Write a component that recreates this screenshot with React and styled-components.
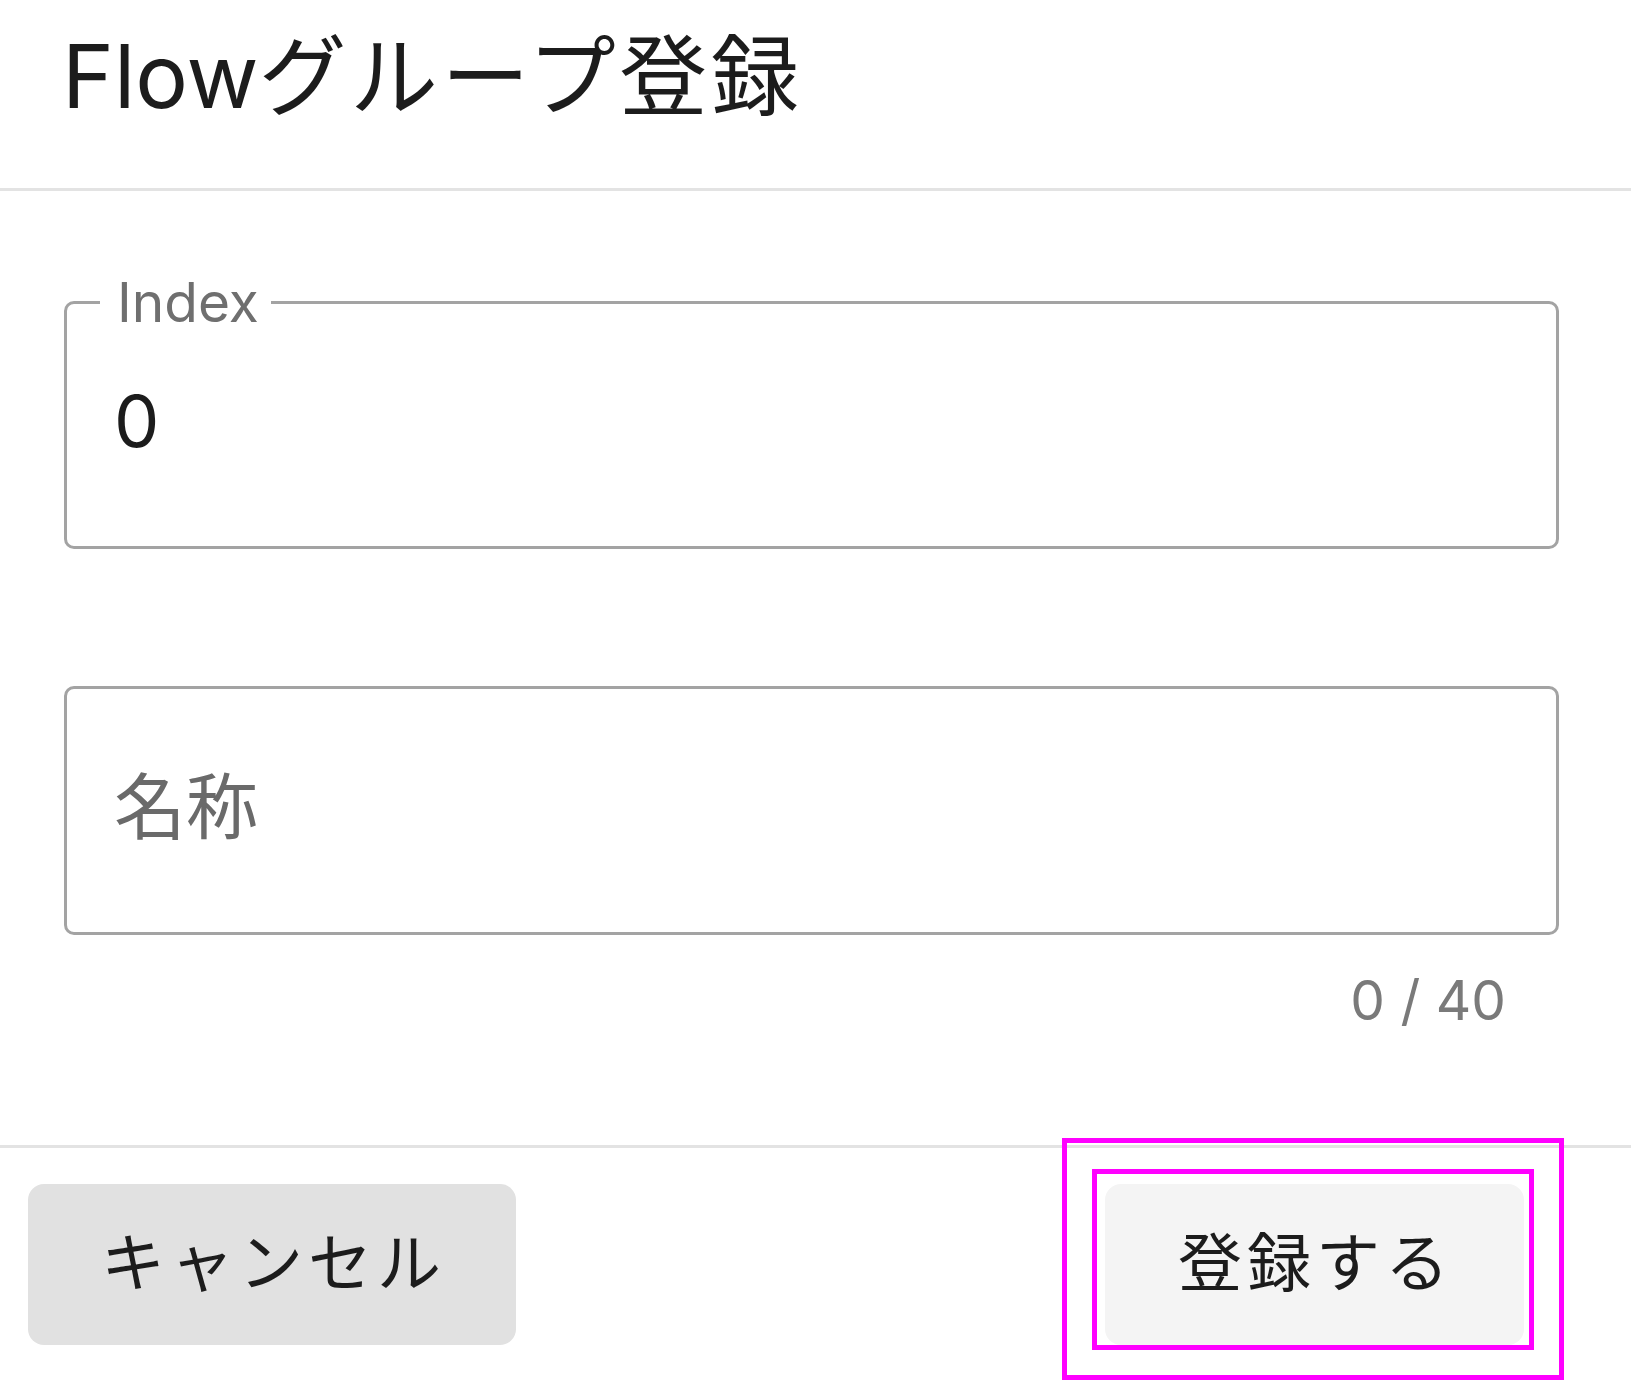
import styled, { createGlobalStyle } from "styled-components";

const GlobalStyle = createGlobalStyle`
  html, body {
    margin: 0;
    padding: 0;
    background: #fff;
  }
  body {
    font-family: Inter, "Noto Sans CJK JP", sans-serif;
    color: rgba(0, 0, 0, 0.87);
  }
`;

const Card = styled.div`
  width: 1631px;
  min-height: 1390px;
  display: flex;
  flex-direction: column;
  background: #fff;
`;

const Header = styled.header`
  padding: 32px 62px 68px;
`;

const Title = styled.h1`
  margin: 0;
  font-size: 88px;
  line-height: 88px;
  font-weight: 400;
  color: #1c1c1c;
  white-space: nowrap;
`;

/* the kana and kanji sit a little wider apart than the latin part */
const Kana = styled.span`
  letter-spacing: 3.5px;
`;

const Divider = styled.hr`
  margin: 0;
  border: 0;
  height: 3px;
  background: #e3e3e3;
`;

const Body = styled.main`
  padding: 81px 72px 115px 64px;
  display: flex;
  flex-direction: column;
`;

const Outline = styled.fieldset`
  margin: ${(p) => (p.$gap ? "137px 0 0" : "0")};
  padding: 0;
  min-width: 0;
  border: 3px solid #a3a3a3;
  border-radius: 10px;
`;

const Legend = styled.legend`
  margin-left: 33px;
  padding: 0 12px 0 17px;
  font-size: 55px;
  line-height: 60px;
  color: #6f6f6f;
`;

const Input = styled.div`
  padding: ${(p) => (p.$labelled ? "44px 47px 80px" : "73px 47px 80px")};
  font-size: 72px;
  line-height: 90px;
  color: ${(p) => (p.$placeholder ? "#6a6a6a" : "#1c1c1c")};
`;

const Counter = styled.div`
  margin-top: 35px;
  padding-right: 53px;
  text-align: right;
  font-size: 55px;
  line-height: 60px;
  color: #7a7a7a;
`;

const Footer = styled.footer`
  padding: 36px 107px 45px 28px;
  display: flex;
  align-items: center;
  justify-content: space-between;
`;

const Button = styled.button`
  height: 161px;
  padding: 0 70px 14px 73px;
  border: 0;
  border-radius: 16px;
  background: ${(p) => (p.$muted ? "#f4f4f4" : "#e1e1e1")};
  font-family: "Noto Sans CJK JP", sans-serif;
  font-size: 64px;
  letter-spacing: 5px;
  color: #1c1c1c;
`;

const Highlight = styled.div`
  position: relative;
  display: flex;

  &::before,
  &::after {
    content: "";
    position: absolute;
    border: 5px solid #ff00ff;
    pointer-events: none;
  }
  &::before {
    top: -15px;
    right: -10px;
    bottom: -5px;
    left: -13px;
  }
  &::after {
    top: -46px;
    right: -40px;
    bottom: -35px;
    left: -43px;
  }
`;

const Field = ({ label, value, placeholder, gap }) => (
  <Outline $gap={gap}>
    {label && <Legend>{label}</Legend>}
    <Input $labelled={!!label} $placeholder={!value}>
      {value || placeholder}
    </Input>
  </Outline>
);

export default function App() {
  return (
    <Card>
      <GlobalStyle />
      <Header>
        <Title>
          Flow<Kana>グループ登録</Kana>
        </Title>
      </Header>
      <Divider />
      <Body>
        <Field label="Index" value="0" />
        <Field placeholder="名称" gap />
        <Counter>0 / 40</Counter>
      </Body>
      <Divider />
      <Footer>
        <Button>キャンセル</Button>
        <Highlight>
          <Button $muted>登録する</Button>
        </Highlight>
      </Footer>
    </Card>
  );
}
